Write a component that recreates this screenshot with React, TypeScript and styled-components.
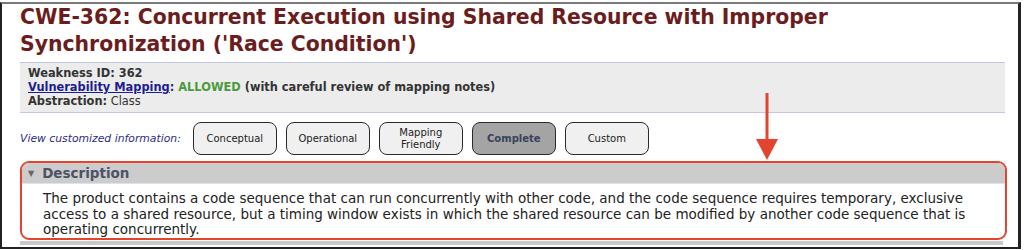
import styled, { createGlobalStyle } from "styled-components";

const GlobalStyle = createGlobalStyle`
  html, body {
    margin: 0;
    padding: 0;
    background: #ffffff;
  }
  body {
    font-family: "DejaVu Sans", Verdana, sans-serif;
    color: #222;
  }
`;

const Frame = styled.div`
  position: relative;
  box-sizing: border-box;
  width: 1021px;
  height: 247px;
  margin-top: 2px;
  border-top: 2px solid #7a7a7a;
  border-left: 2px solid #222;
  border-right: 3px solid #222;
  border-bottom: 2px solid #222;
  padding: 0 13px 0 18px;
  overflow: hidden;
  background: #fff;
`;

const Title = styled.h1`
  margin: 0;
  font-size: 20.4px;
  line-height: 27px;
  font-weight: bold;
  color: #6b1d1d;
`;

const MetaBox = styled.div`
  margin-top: 4px;
  padding: 3px 8px 4px;
  background: #ececec;
  border-top: 1px solid #c3c7de;
  border-bottom: 1px solid #c3c7de;
  font-size: 11.4px;
  line-height: 14px;
  color: #333;
`;

const MetaLine = styled.div``;

const Label = styled.span`
  font-weight: bold;
`;

const MapLink = styled.a`
  color: #1c1c94;
  font-weight: bold;
  text-decoration: underline;
`;

const Allowed = styled.span`
  color: #4c9a3e;
  font-weight: bold;
`;

const ViewRow = styled.div`
  display: flex;
  align-items: center;
  margin-top: 9px;
`;

const ViewLabel = styled.span`
  font-style: italic;
  font-size: 10.8px;
  color: #2b2b86;
  margin-right: 12px;
`;

const Buttons = styled.div`
  display: flex;
  gap: 9px;
`;

const ViewButton = styled.button<{ $active?: boolean }>`
  box-sizing: border-box;
  width: 84px;
  height: 33px;
  padding: 0;
  border: 1.5px solid #2a2a2a;
  border-radius: 8px;
  background: ${(p) => (p.$active ? "#a4a4a4" : "#f0f0f0")};
  color: ${(p) => (p.$active ? "#38425a" : "#222")};
  font-family: "DejaVu Sans", Verdana, sans-serif;
  font-size: 10px;
  line-height: 12px;
  font-weight: ${(p) => (p.$active ? "bold" : "normal")};
`;

const Section = styled.div`
  margin: 6px -2px 0 0;
  border: 2px solid #e4442e;
  border-radius: 9px;
  overflow: hidden;
`;

const SectionHeader = styled.div`
  display: flex;
  align-items: center;
  height: 20px;
  padding-left: 6px;
  background: #cccccc;
  border-bottom: 1px solid #dfe2ee;
  font-size: 13.5px;
  font-weight: bold;
  color: #4d5366;
`;

const Caret = styled.span`
  font-size: 8px;
  color: #666;
  margin-right: 8px;
`;

const SectionBody = styled.div`
  padding: 7px 8px 0 21px;
  font-size: 13.5px;
  line-height: 15.5px;
  color: #222;
`;

const NextBar = styled.div`
  margin: 1px 2px 0 0;
  height: 4px;
  background: #c9c9c9;
`;

const Arrow = styled.svg`
  position: absolute;
  left: 753px;
  top: 89px;
`;

export default function App() {
  return (
    <>
      <GlobalStyle />
      <Frame>
        <Title>
          CWE-362: Concurrent Execution using Shared Resource with Improper
          Synchronization ('Race Condition')
        </Title>
        <MetaBox>
          <MetaLine>
            <Label>Weakness ID: 362</Label>
          </MetaLine>
          <MetaLine>
            <MapLink href="#">Vulnerability Mapping</MapLink>
            <Label>: </Label>
            <Allowed>ALLOWED</Allowed>
            <Label> (with careful review of mapping notes)</Label>
          </MetaLine>
          <MetaLine>
            <Label>Abstraction:</Label> Class
          </MetaLine>
        </MetaBox>
        <ViewRow>
          <ViewLabel>View customized information:</ViewLabel>
          <Buttons>
            <ViewButton>Conceptual</ViewButton>
            <ViewButton>Operational</ViewButton>
            <ViewButton>
              Mapping
              <br />
              Friendly
            </ViewButton>
            <ViewButton $active>Complete</ViewButton>
            <ViewButton>Custom</ViewButton>
          </Buttons>
        </ViewRow>
        <Section>
          <SectionHeader>
            <Caret>▼</Caret>
            Description
          </SectionHeader>
          <SectionBody>
            The product contains a code sequence that can run concurrently with
            other code, and the code sequence requires temporary, exclusive
            access to a shared resource, but a timing window exists in which the
            shared resource can be modified by another code sequence that is
            operating concurrently.
          </SectionBody>
        </Section>
        <NextBar />
        <Arrow width="24" height="68" viewBox="0 0 24 68">
          <rect x="10.5" y="0" width="3" height="48" fill="#e4442e" />
          <polygon points="1,46 23,46 12,67" fill="#e4442e" />
        </Arrow>
      </Frame>
    </>
  );
}
